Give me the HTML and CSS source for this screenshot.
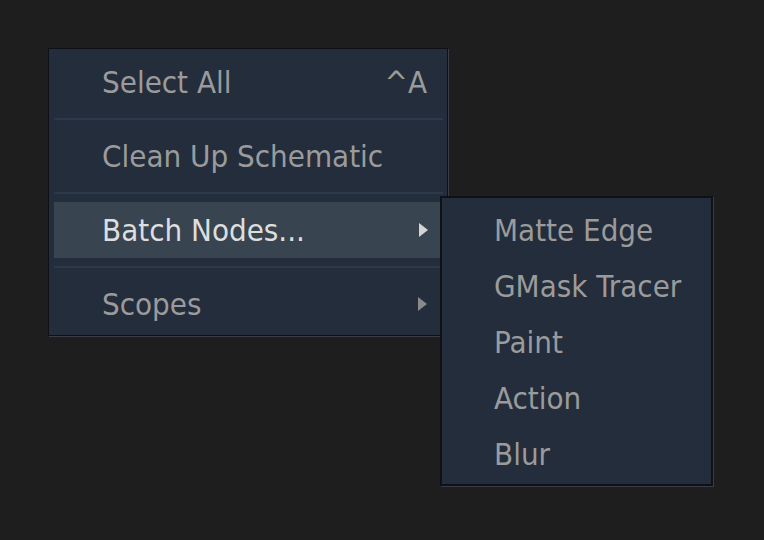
FILE: index.html
```html
<!DOCTYPE html>
<html>
<head>
<meta charset="utf-8">
<link rel="stylesheet" href="styles.css">
</head>
<body>
<div class="stage">
  <div class="menu">
    <div class="item first"><span class="label">Select All</span><span class="shortcut">^A</span></div>
    <div class="sep"></div>
    <div class="item"><span class="label">Clean Up Schematic</span></div>
    <div class="sep"></div>
    <div class="item active"><div class="hl"><span class="label">Batch Nodes...</span><span class="arrow"></span></div></div>
    <div class="sep"></div>
    <div class="item last"><span class="label">Scopes</span><span class="arrow dim"></span></div>
  </div>
  <div class="submenu">
    <div class="subitem">Matte Edge</div>
    <div class="subitem">GMask Tracer</div>
    <div class="subitem">Paint</div>
    <div class="subitem">Action</div>
    <div class="subitem">Blur</div>
  </div>
</div>
</body>
</html>
```
FILE: styles.css
```css
*, *::before, *::after {
  box-sizing: border-box;
}
html, body {
  margin: 0;
  padding: 0;
  background: #1e1e1e;
  width: 764px;
  height: 540px;
  overflow: hidden;
}
.stage {
  position: relative;
  padding: 48px 0 0 48px;
  font-family: "DejaVu Sans Condensed", "DejaVu Sans", sans-serif;
  font-stretch: condensed;
  font-size: 31px;
  color: #9b9b9b;
}
.menu {
  width: 400px;
  height: 288px;
  background: #232d3b;
  border: 1px solid #0e1115;
  box-shadow: 1px 1px 0 #3a3e44;
  padding: 0 4px 0 5px;
  display: flex;
  flex-direction: column;
  overflow: hidden;
}
.item {
  height: 72px;
  display: flex;
  align-items: center;
  padding: 0 16px 0 48px;
  flex: none;
}
.item.first {
  height: 69px;
  padding-bottom: 3px;
}
.item.last {
  height: 67px;
  padding-top: 5px;
}
.label {
  flex: 1;
  line-height: 40px;
  white-space: nowrap;
}
.shortcut {
  line-height: 40px;
}
.sep {
  height: 2px;
  background: #2c394a;
  flex: none;
}
.item.active {
  padding: 8px 0;
}
.hl {
  flex: 1;
  height: 56px;
  background: #394451;
  display: flex;
  align-items: center;
  padding: 0 15px 0 48px;
  color: #dedede;
}
.arrow {
  width: 0;
  height: 0;
  border-top: 7px solid transparent;
  border-bottom: 7px solid transparent;
  border-left: 9px solid #d4d4d4;
}
.arrow.dim {
  border-left-color: #8a8a8a;
}
.submenu {
  position: absolute;
  left: 440px;
  top: 196px;
  width: 273px;
  height: 290px;
  background: #232d3b;
  border: 2px solid #0e1115;
  box-shadow: 1px 1px 0 #3a3e44;
  padding: 4px 0 2px 0;
  display: flex;
  flex-direction: column;
}
.subitem {
  height: 56px;
  line-height: 56px;
  padding-left: 52px;
  white-space: nowrap;
}
```
